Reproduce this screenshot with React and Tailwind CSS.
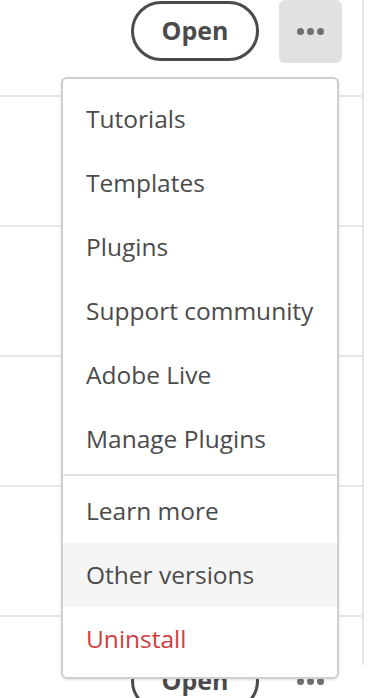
import React from 'react';

const items = ['Tutorials', 'Templates', 'Plugins', 'Support community', 'Adobe Live', 'Manage Plugins'];

function Dots() {
    return (
        <div className='flex items-center justify-center gap-[3px]'>
            <span className='w-[7px] h-[7px] rounded-full bg-[#707070]' />
            <span className='w-[7px] h-[7px] rounded-full bg-[#707070]' />
            <span className='w-[7px] h-[7px] rounded-full bg-[#707070]' />
        </div>
    );
}

function Row({ active, empty }) {
    return (
        <div className='h-[130px] border-b-2 border-[#e6e6e6] flex items-center justify-end pr-[20px] gap-[20px]'>
            {!empty && (
                <>
                    <button className='w-[128px] h-[60px] rounded-full border-[3px] border-[#4b4b4b] text-[#4b4b4b] text-[25px] font-bold flex items-center justify-center'>
                        Open
                    </button>
                    <div className={'w-[63px] h-[63px] rounded-[6px] flex items-center justify-center ' + (active ? 'bg-[#e1e1e1]' : '')}>
                        <Dots />
                    </div>
                </>
            )}
        </div>
    );
}

const itemCls = 'h-[64px] flex items-center px-[23px] text-[24.5px] text-[#4b4b4b]';

export default function App() {
    return (
        <div className='relative w-[372px] h-[698px] overflow-hidden bg-white' style={{ fontFamily: '"Open Sans", "Noto Sans", sans-serif' }}>
            <div className='w-[364px] h-full border-r-2 border-[#e6e6e6] mt-[-33px]'>
                <Row active />
                <Row empty />
                <Row empty />
                <Row empty />
                <Row empty />
                <Row />
            </div>

            <div className='absolute left-[61px] top-[77px] w-[278px] bg-white border-2 border-[#cfcfcf] rounded-[6px] shadow-[0_1px_3px_rgba(0,0,0,0.12)] pt-[8px] pb-[6px]'>
                {items.map((t) => (
                    <div key={t} className={itemCls}>
                        {t}
                    </div>
                ))}
                <div className='my-[3px] h-[2px] bg-[#e1e1e1]' />
                <div className={itemCls}>Learn more</div>
                <div className={itemCls + ' bg-[#f5f5f5]'}>Other versions</div>
                <div className='h-[64px] flex items-center px-[23px] text-[24.5px] text-[#d13d3d]'>Uninstall</div>
            </div>
        </div>
    );
}
